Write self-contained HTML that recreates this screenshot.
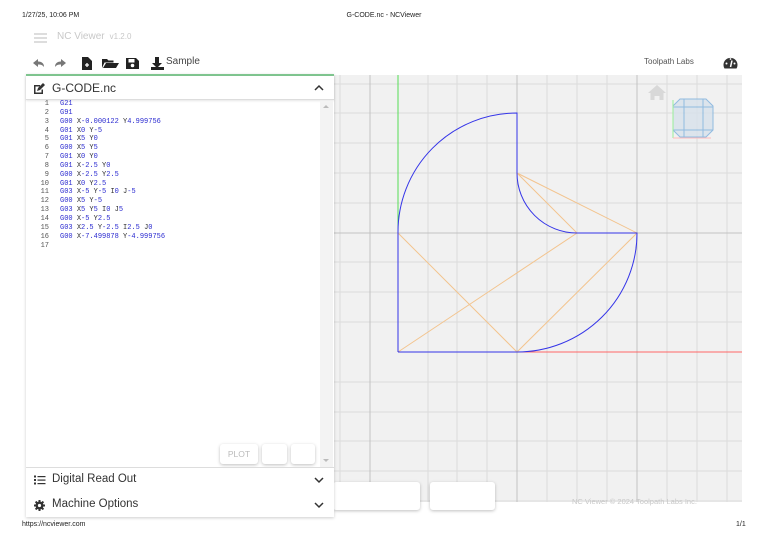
<!DOCTYPE html>
<html><head><meta charset="utf-8"><style>
*{margin:0;padding:0;box-sizing:border-box}
body{width:768px;height:543px;background:#fff;font-family:"Liberation Sans",sans-serif;position:relative;overflow:hidden}
.a{position:absolute}
.code{font-family:"Liberation Mono",monospace;font-size:7px;line-height:8.85px;color:#2a2ad0;white-space:pre}
.ln{font-family:"Liberation Mono",monospace;font-size:7px;line-height:8.85px;color:#555;text-align:right;white-space:pre}
.btn{background:#fff;border-radius:3px;box-shadow:0 1px 3px rgba(0,0,0,.25)}
.k{color:#333}
</style></head><body>
<div class="a" style="left:22px;top:12px;font-size:7px;color:#222">1/27/25, 10:06 PM</div>
<div class="a" style="left:0;width:768px;text-align:center;top:12px;font-size:7px;color:#222">G-CODE.nc - NCViewer</div>
<div class="a" style="left:34px;top:33px;width:13px;height:10px;border-top:2px solid #ddd;border-bottom:2px solid #ddd"></div>
<div class="a" style="left:34px;top:37px;width:13px;height:2px;background:#ddd"></div>
<div class="a" style="left:57px;top:31px;font-size:10px;color:#c8c8c8">NC Viewer <span style="font-size:8px">&nbsp;v1.2.0</span></div>
<svg class="a" style="left:30px;top:55px" width="180" height="16" viewBox="0 0 180 16">
<path d="M3 8 L8 4 V6.5 C12 6.5 14 8.5 14 12 C12.5 10 11 9.5 8 9.5 V12 Z" fill="#777"/>
<path d="M36 8 L31 4 V6.5 C27 6.5 25 8.5 25 12 C26.5 10 28 9.5 31 9.5 V12 Z" fill="#777"/>
<path d="M52 2 h6 l4 4 v9 h-10 z" fill="#222"/><path d="M55 10 h4 M57 8 v4" stroke="#fff" stroke-width="1.3"/>
<path d="M72 4 h5 l1.5 1.5 h5 v2 h-9 l-2.5 5.5 z M73 13 l3 -5 h13 l-3 5 z" fill="#222"/>
<path d="M96 3 h10 l3 3 v8 h-13 z" fill="#222"/><rect x="98.5" y="4" width="6" height="3.5" fill="#fff"/><circle cx="102.5" cy="10.5" r="1.8" fill="#fff"/>
<path d="M125 2 h4 v6 h3 l-5 5 l-5 -5 h3 z" fill="#222"/><rect x="121" y="12" width="13" height="3" fill="#222"/>
</svg>
<div class="a" style="left:166px;top:56px;font-size:10px;color:#444">Sample</div>
<div class="a" style="left:644px;top:57px;font-size:8px;color:#555">Toolpath Labs</div>
<svg class="a" style="left:722px;top:55px" width="17" height="14" viewBox="0 0 17 14"><path d="M2.5 13.5 A7 7 0 1 1 14.5 13.5 Z" fill="#333"/><path d="M8.5 12 L10 5.5" stroke="#fff" stroke-width="1.5"/><circle cx="4.5" cy="8.5" r="1" fill="#fff"/><circle cx="12.5" cy="8.5" r="1" fill="#fff"/><circle cx="8.5" cy="4" r="0.9" fill="#fff"/></svg>
<svg class="a" style="left:26px;top:75px" width="716" height="427" viewBox="26 75 716 427">
<rect x="26" y="75" width="716" height="427" fill="#f1f1f1"/>
<g stroke="#dcdcdc" stroke-width="1">
<path d="M340 75V502M428 75V502M457 75V502M487 75V502M547 75V502M577 75V502M607 75V502M667 75V502M697 75V502M727 75V502"/>
<path d="M26 84H742M26 113H742M26 143H742M26 173H742M26 203H742M26 262H742M26 292H742M26 322H742M26 382H742M26 412H742M26 441H742M26 471H742M26 501H742"/>
</g>
<g stroke="#c2c2c2"><path d="M370 75V502M517 75V502M637 75V502M26 233H742"/></g>
<path d="M398 75V352" stroke="#5d5" stroke-width="1"/>
<path d="M398 352H742" stroke="#f66" stroke-width="1"/>
<g fill="none" stroke="#f3c48e" stroke-width="1">
<path d="M398 233L517 352L637 233L517 173L577 233L398 352"/>
</g>
<g fill="none" stroke="#3434e8" stroke-width="1">
<path d="M398 352V233A119 119 0 0 1 517 113V173A60 60 0 0 0 577 233H637A120 119 0 0 1 517 352H398"/>
</g>
<path d="M648 93 l9 -8 l9 8 h-2.5 v7 h-4 v-4 h-5 v4 h-4 v-7 z" fill="#d8d8d8"/>
<g opacity=".8"><path d="M680 99 h26 l7 7 v24 l-7 7 h-26 l-7 -7 v-24 z" fill="#d8e2ec" stroke="#7aaedc"/>
<path d="M684 99v38M703 99v38M673 107h40M673 130h40" stroke="#7aaedc"/></g>
<path d="M673 100V138" stroke="#9e9"/><path d="M673 138H711" stroke="#fbb"/>
<rect x="26" y="500" width="310" height="17" fill="#fff"/>
</svg>
<div class="a" style="left:572px;top:497px;font-size:7.5px;color:#c8c8c8">NC Viewer © 2024 Toolpath Labs Inc.</div>
<div class="a btn" style="left:333px;top:482px;width:87px;height:28px"></div>
<div class="a btn" style="left:430px;top:482px;width:65px;height:28px"></div>
<div class="a" style="left:26px;top:74px;width:308px;height:443px;background:#fff;box-shadow:0 1px 3px rgba(0,0,0,.2);border-top:2px solid #7fc58f"></div>
<div class="a" style="left:26px;top:76px;width:308px;height:24px;border-bottom:1px solid #ddd;box-shadow:0 1px 2px rgba(0,0,0,.1)"></div>
<svg class="a" style="left:33px;top:83px" width="12" height="11" viewBox="0 0 12 11"><path d="M1 2h6v1.5H2.5v6h6V6.5H10V11H1z" fill="#333"/><path d="M4 8l1-3l5-5l2 2l-5 5z" fill="#333"/></svg>
<div class="a" style="left:52px;top:81px;font-size:12px;color:#333">G-CODE.nc</div>
<svg class="a" style="left:314px;top:84px" width="10" height="7"><path d="M1 6L5 2L9 6" stroke="#333" stroke-width="1.5" fill="none"/></svg>
<div class="a ln" style="left:28px;top:100px;width:21px">1
2
3
4
5
6
7
8
9
10
11
12
13
14
15
16
17</div>
<div class="a code" style="left:60px;top:100px">G21
G91
G00 <span class="k">X</span>-0.000122 <span class="k">Y</span>4.999756
G01 <span class="k">X</span>0 <span class="k">Y</span>-5
G01 <span class="k">X</span>5 <span class="k">Y</span>0
G00 <span class="k">X</span>5 <span class="k">Y</span>5
G01 <span class="k">X</span>0 <span class="k">Y</span>0
G01 <span class="k">X</span>-2.5 <span class="k">Y</span>0
G00 <span class="k">X</span>-2.5 <span class="k">Y</span>2.5
G01 <span class="k">X</span>0 <span class="k">Y</span>2.5
G03 <span class="k">X</span>-5 <span class="k">Y</span>-5 <span class="k">I</span>0 <span class="k">J</span>-5
G00 <span class="k">X</span>5 <span class="k">Y</span>-5
G03 <span class="k">X</span>5 <span class="k">Y</span>5 <span class="k">I</span>0 <span class="k">J</span>5
G00 <span class="k">X</span>-5 <span class="k">Y</span>2.5
G03 <span class="k">X</span>2.5 <span class="k">Y</span>-2.5 <span class="k">I</span>2.5 <span class="k">J</span>0
G00 <span class="k">X</span>-7.499878 <span class="k">Y</span>-4.999756
</div>
<div class="a" style="left:320px;top:101px;width:13px;height:366px;background:#f3f3f3"></div>
<div class="a" style="left:323px;top:105px;width:0;height:0;border:3px solid transparent;border-bottom:3px solid #bbb;border-top:0"></div>
<div class="a" style="left:323px;top:459px;width:0;height:0;border:3px solid transparent;border-top:3px solid #bbb;border-bottom:0"></div>
<div class="a btn" style="left:220px;top:444px;width:38px;height:20px;font-size:8.5px;color:#bbb;text-align:center;line-height:20px">PLOT</div>
<div class="a btn" style="left:262px;top:444px;width:25px;height:20px"></div>
<div class="a btn" style="left:291px;top:444px;width:24px;height:20px"></div>
<div class="a" style="left:26px;top:467px;width:308px;height:1px;background:#ddd"></div>
<svg class="a" style="left:34px;top:475px" width="12" height="10"><g fill="#333"><rect x="0" y="0.5" width="2" height="2"/><rect x="0" y="4" width="2" height="2"/><rect x="0" y="7.5" width="2" height="2"/><rect x="3.5" y="1" width="8" height="1.2"/><rect x="3.5" y="4.5" width="8" height="1.2"/><rect x="3.5" y="8" width="8" height="1.2"/></g></svg>
<div class="a" style="left:52px;top:473px;font-size:11.5px;color:#333">Digital Read Out</div>
<svg class="a" style="left:314px;top:477px" width="10" height="7"><path d="M1 1L5 5L9 1" stroke="#333" stroke-width="1.5" fill="none"/></svg>
<svg class="a" style="left:34px;top:500px" width="11" height="11" viewBox="0 0 11 11"><circle cx="5.5" cy="5.5" r="4" fill="#333"/><path d="M5.5 0v11M0 5.5h11M1.6 1.6l7.8 7.8M9.4 1.6l-7.8 7.8" stroke="#333" stroke-width="2"/><circle cx="5.5" cy="5.5" r="1.6" fill="#fff"/></svg>
<div class="a" style="left:52px;top:498px;font-size:11.5px;color:#333">Machine Options</div>
<svg class="a" style="left:314px;top:502px" width="10" height="7"><path d="M1 1L5 5L9 1" stroke="#333" stroke-width="1.5" fill="none"/></svg>
<div class="a" style="left:22px;top:521px;font-size:7px;color:#222">https://ncviewer.com</div>
<div class="a" style="left:736px;top:521px;font-size:7px;color:#222">1/1</div>
</body></html>
